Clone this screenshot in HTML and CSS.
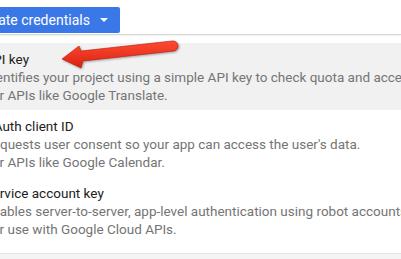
FILE: index.html
```html
<!DOCTYPE html>
<html lang="en">
<head>
    <meta charset="UTF-8">
    <meta name="viewport" content="width=device-width, initial-scale=1.0">
    <title>Credentials</title>
    <link rel="stylesheet" href="styles.css">
</head>
<body>
    <div class="toolbar">
        <button class="create-btn">
            <span>Create credentials</span>
            <span class="caret"></span>
        </button>
    </div>

    <div class="menu">
        <div class="menu-item active">
            <div class="item-title">API key</div>
            <div class="item-desc">Identifies your project using a simple API key to check quota and access.<br>For APIs like Google Translate.</div>
        </div>
        <div class="menu-item">
            <div class="item-title">OAuth client ID</div>
            <div class="item-desc">Requests user consent so your app can access the user's data.<br>For APIs like Google Calendar.</div>
        </div>
        <div class="menu-item">
            <div class="item-title">Service account key</div>
            <div class="item-desc">Enables server-to-server, app-level authentication using robot accounts.<br>For use with Google Cloud APIs.</div>
        </div>
    </div>
    <div class="page-bottom"></div>

    <svg class="arrow" width="130" height="40" viewBox="55 36 130 40">
        <defs>
            <linearGradient id="arrowFill" x1="0" y1="0" x2="0" y2="1">
                <stop offset="0" stop-color="#ff4a33"/>
                <stop offset="1" stop-color="#d8220f"/>
            </linearGradient>
        </defs>
        <path d="M62 59 L79 46 L81 51 L172 41 A5 5 0 0 1 174 51 L83 61 L81 68 Z"
              fill="url(#arrowFill)" stroke="#b81a0c" stroke-width="0.6" stroke-linejoin="round"/>
    </svg>
</body>
</html>
```

FILE: styles.css
```css
* {
    margin: 0;
    padding: 0;
    box-sizing: border-box;
    font-family: Roboto, 'Liberation Sans', sans-serif;
}

body {
    width: 401px;
    height: 259px;
    overflow: hidden;
    background: white;
    position: relative;
}

.toolbar {
    height: 35px;
    padding-top: 7px;
    border-bottom: 1px solid #d6d6d6;
    box-shadow: 0 1px 2px rgba(0, 0, 0, 0.06);
    display: flex;
}

.create-btn {
    height: 26px;
    margin-left: -39px;
    padding: 0 12px 0 16px;
    display: flex;
    align-items: center;
    gap: 10px;
    background: #3b78e7;
    color: white;
    border: none;
    border-radius: 2px;
    font-size: 14px;
}

.caret {
    width: 0;
    height: 0;
    border-left: 4px solid transparent;
    border-right: 4px solid transparent;
    border-top: 4px solid white;
}

.menu {
    padding: 8px 0 9px;
}

.menu-item {
    padding: 8px 0 6px;
    white-space: nowrap;
}

.menu-item.active {
    background: #f1f1f1;
}

.item-title {
    font-size: 13.5px;
    line-height: 17px;
    color: #212121;
}

.item-desc {
    font-size: 13.5px;
    line-height: 18px;
    color: #757575;
}

.menu-item .item-title,
.menu-item .item-desc {
    margin-left: -15.5px;
}

.page-bottom {
    height: 10px;
    border-top: 1px solid #e6e6e6;
    background: #f4f4f4;
}

.arrow {
    position: absolute;
    left: 55px;
    top: 36px;
    filter: drop-shadow(1px 1px 1px rgba(0, 0, 0, 0.35));
}
```
